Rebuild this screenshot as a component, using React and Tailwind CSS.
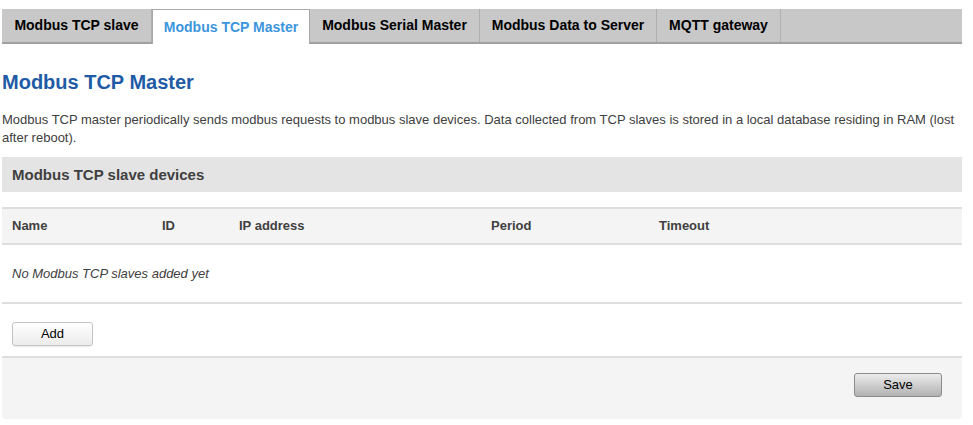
import React from 'react';

const tabs = [
  { label: 'Modbus TCP slave', w: 'w-[150px]' },
  { label: 'Modbus TCP Master', w: 'w-[158px]', active: true },
  { label: 'Modbus Serial Master', w: 'w-[170px]' },
  { label: 'Modbus Data to Server', w: 'w-[177px]' },
  { label: 'MQTT gateway', w: 'w-[124px]' },
];

const cols = ['Name', 'ID', 'IP address', 'Period', 'Timeout'];

const App = () => {
  return (
    <main className="bg-white min-h-screen text-[#404040]" style={{ fontFamily: '"Liberation Sans", Arial, sans-serif' }}>
      <div className="ml-[2px] w-[960px] pt-[9px]">
        {/* Tabs */}
        <div className="flex h-[35px] bg-[#c8c8c8] border-b-2 border-[#a0a0a0]">
          {tabs.map((t) =>
            t.active ? (
              <div
                key={t.label}
                className={`${t.w} h-[35px] -mb-[2px] bg-white border-l border-t border-r border-[#a8a8a8] flex items-center justify-center text-[14px] font-bold text-[#3c95dd]`}
              >
                {t.label}
              </div>
            ) : (
              <div
                key={t.label}
                className={`${t.w} flex items-center justify-center text-[14px] font-bold text-black border-r border-[#b0b0b0]`}
              >
                {t.label}
              </div>
            )
          )}
        </div>

        {/* Heading */}
        <h1 className="mt-[26px] text-[20px] leading-[24px] font-bold text-[#1f5ba6]">Modbus TCP Master</h1>
        <p className="mt-[17px] text-[13px] leading-[18px] text-[#404040]">
          Modbus TCP master periodically sends modbus requests to modbus slave devices. Data collected from TCP slaves is stored in a local database residing in RAM (lost after reboot).
        </p>

        {/* Section */}
        <div className="mt-[10px] h-[35px] bg-[#e4e4e4] flex items-center pl-[10px] pt-[2px] text-[15px] font-bold text-[#404040]">
          Modbus TCP slave devices
        </div>

        <div className="mt-[15px] grid grid-cols-[150px_77px_252px_168px_1fr] h-[38px] items-center pl-[10px] bg-[#f4f4f4] border-t-2 border-b-2 border-[#dedede] text-[13px] font-bold text-[#404040]">
          {cols.map((c) => (
            <div key={c}>{c}</div>
          ))}
        </div>

        <div className="h-[59px] flex items-center pl-[10px] pt-[1px] border-b-2 border-[#dedede] text-[13px] italic text-[#404040]">
          No Modbus TCP slaves added yet
        </div>

        <div className="h-[52px] pt-[17px] pl-[10px]">
          <button className="w-[81px] h-[24px] rounded-[3px] border border-[#c4c4c4] bg-gradient-to-b from-white to-[#ececec] text-[13px] text-black shadow-[0_1px_1px_rgba(0,0,0,0.08)]">
            Add
          </button>
        </div>

        <div className="h-[63px] bg-[#f4f4f4] border-t-2 border-[#dedede] rounded-b-[4px] flex justify-end items-start pt-[15px] pr-[20px]">
          <button className="w-[88px] h-[24px] rounded-[3px] border border-[#8c8c8c] bg-gradient-to-b from-[#ececec] to-[#b2b2b2] text-[13px] text-black">
            Save
          </button>
        </div>
      </div>
    </main>
  );
};

export default App;
